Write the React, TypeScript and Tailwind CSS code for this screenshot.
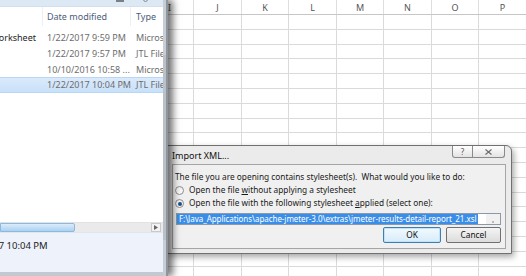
import React from "react";

// ─── Sheet columns (the first one sits under the explorer window) ───────────
const columns = [
  { label: "I", w: "w-[48px]" },
  { label: "J", w: "w-[48px]" },
  { label: "K", w: "w-[47px]" },
  { label: "L", w: "w-[48px]" },
  { label: "M", w: "w-[47px]" },
  { label: "N", w: "w-[48px]" },
  { label: "O", w: "w-[47px]" },
  { label: "P", w: "w-[48px]" },
];

const rowCount = 18;

const files = [
  { name: "New Microsoft Excel Worksheet", date: "1/22/2017 9:59 PM", type: "Microsoft Excel Worksheet", selected: false },
  { name: "", date: "1/22/2017 9:57 PM", type: "JTL File", selected: false },
  { name: "", date: "10/10/2016 10:58 ...", type: "Microsoft Excel Worksheet", selected: false },
  { name: "", date: "1/22/2017 10:04 PM", type: "JTL File", selected: true },
];

function Sheet() {
  return (
    <div className="flex flex-col pl-[146px] bg-white">
      <div className="flex h-[15px] border-b border-[#c6c6c6] bg-white">
        {columns.map((c) => (
          <div
            key={c.label}
            className={`${c.w} shrink-0 flex items-center justify-center border-r border-[#dedede] text-[9px] text-[#555] leading-none`}
          >
            {c.label}
          </div>
        ))}
      </div>
      {Array.from({ length: rowCount }).map((_, r) => (
        <div key={r} className="flex h-[14.8px]">
          {columns.map((c) => (
            <div key={c.label} className={`${c.w} shrink-0 border-r border-b border-[#dadada]`} />
          ))}
        </div>
      ))}
    </div>
  );
}

function Explorer() {
  return (
    <div className="absolute left-0 top-0 z-20 flex h-[276px] w-[168px] shadow-[5px_0_7px_rgba(0,0,0,0.55)]">
      <div className="flex w-[163px] flex-col overflow-hidden bg-white text-[9px] leading-none">
        {/* toolbar strip */}
        <div className="relative h-[7px] bg-[#dde8f5] border-b border-[#d5dfeb]">
          <div className="absolute left-[116px] top-0 h-[2px] w-[8px] bg-[#7a7f86]" />
          <div className="absolute left-[143px] top-[-3px] h-[5px] w-[5px] rounded-full border border-[#8a9099]" />
        </div>

        {/* column headers */}
        <div className="flex h-[19px] items-center text-[#4c607a]">
          <div className="h-full w-[43px] border-r border-[#eceff3]" />
          <div className="flex h-full w-[88px] items-center border-r border-[#eceff3] pl-[4px]">Date modified</div>
          <div className="pl-[5px]">Type</div>
        </div>

        {/* rows */}
        <div className="flex flex-col pt-[4px]">
          {files.map((f) => (
            <div
              key={f.date}
              className={`flex h-[15.7px] items-center whitespace-nowrap ${
                f.selected ? "bg-gradient-to-b from-[#dbeafb] to-[#c8e0f9] border-y border-[#b8d6f5]" : ""
              }`}
            >
              <div className="flex w-[43px] shrink-0 justify-end overflow-hidden pr-[7px] text-[#1e1e1e]">{f.name}</div>
              <div className="w-[88px] shrink-0 overflow-hidden pl-[4px] text-[#6d6d6d]">{f.date}</div>
              <div className="min-w-0 flex-1 overflow-hidden pl-[5px] text-[#6d6d6d]">{f.type}</div>
            </div>
          ))}
        </div>

        <div className="flex-1" />

        {/* horizontal scrollbar */}
        <div className="flex h-[10px] items-stretch bg-[#eaeaea] border-t border-[#e2e2e2]">
          <div className="w-[75px] rounded-r-[2px] border border-[#8fb8dd] bg-gradient-to-b from-[#dcecfa] to-[#a9d2f2]" />
          <div className="flex-1" />
          <div className="mr-[2px] flex w-[10px] items-center justify-center border border-[#c9c9c9] bg-[#f3f3f3]">
            <svg width="4" height="5" viewBox="0 0 4 5">
              <path d="M0 0 L4 2.5 L0 5 Z" fill="#666" />
            </svg>
          </div>
        </div>

        {/* status */}
        <div className="flex h-[40px] items-start overflow-hidden border-t border-[#dfe6f0] bg-[#eef2fb] pt-[8px]">
          <span className="-ml-[41px] whitespace-nowrap text-[9.5px] text-[#222]">1/22/2017 10:04 PM</span>
        </div>
        <div className="h-[4px] bg-[#c3c9d0]" />
      </div>

      {/* frame edge */}
      <div className="flex w-[5px] flex-col bg-[#c7cdd4] border-r-2 border-[#8e959c]">
        <div className="h-[55px]" />
        <div className="h-[185px] bg-[#b9c0c7]" />
      </div>
    </div>
  );
}

function Radio({ checked }: { checked?: boolean }) {
  return (
    <span className="flex h-[9px] w-[9px] shrink-0 items-center justify-center rounded-full border border-[#8d8d8d] bg-gradient-to-br from-[#e6e6e6] to-white">
      {checked && <span className="h-[4px] w-[4px] rounded-full bg-[#1f4f8a]" />}
    </span>
  );
}

function ImportDialog() {
  return (
    <div className="absolute left-[166px] top-[145px] z-10 flex h-[109px] w-[346px] flex-col rounded-tr-[6px] border border-[#707070] bg-[#ebebeb] shadow-[2px_3px_6px_rgba(0,0,0,0.35)]">
      {/* title bar */}
      <div className="flex h-[17px] items-start justify-between">
        <span className="pl-[5px] pt-[5px] text-[9px] leading-none text-[#111]">Import XML...</span>
        <div className="mr-[6px] flex">
          <div className="flex h-[12px] w-[21px] items-center justify-center rounded-bl-[3px] border border-t-0 border-[#8a8a8a] bg-gradient-to-b from-white to-[#e3e3e3] text-[8px] leading-none text-[#555]">
            ?
          </div>
          <div className="flex h-[12px] w-[32px] items-center justify-center rounded-br-[3px] border border-l-0 border-t-0 border-[#8a8a8a] bg-gradient-to-b from-white to-[#e3e3e3]">
            <svg width="7" height="6" viewBox="0 0 7 6">
              <path d="M0.5 0.5 L6.5 5.5 M6.5 0.5 L0.5 5.5" stroke="#6a6a6a" strokeWidth="1.1" fill="none" />
            </svg>
          </div>
        </div>
      </div>

      {/* content */}
      <div className="mx-[5px] mt-[1px] flex h-[85px] flex-col border border-[#a5a5a5] bg-[#f0f0f0] pl-[2px] pr-[4px] pt-[6px] text-[8.3px] leading-none text-[#1a1a1a]">
        <div className="flex h-[13px] items-center whitespace-nowrap">
          The file you are opening contains stylesheet(s).&nbsp; What would you like to do:
        </div>
        <div className="flex h-[13px] items-center gap-[5px] whitespace-nowrap">
          <Radio />
          <span>
            Open the file <span className="underline">w</span>ithout applying a stylesheet
          </span>
        </div>
        <div className="flex h-[13px] items-center gap-[5px] whitespace-nowrap">
          <Radio checked />
          <span>
            Open the file with the following stylesheet <span className="underline">a</span>pplied (select one):
          </span>
        </div>
        <div className="ml-[1px] mt-[3px] flex h-[12px] border border-[#8c99a8] bg-white">
          <div className="flex min-w-0 flex-1 items-center overflow-hidden">
            <span className="whitespace-nowrap bg-[#3a8ee8] px-[2px] text-[8px] leading-[10px] tracking-[-0.05px] text-white">
              F:\Java_Applications\apache-jmeter-3.0\extras\jmeter-results-detail-report_21.xsl
            </span>
          </div>
          <div className="flex w-[14px] shrink-0 items-end justify-center bg-[#f1f1f1] pb-[1px]">
            <span className="h-[2px] w-[2px] bg-[#b9b9b9]" />
          </div>
        </div>
        <div className="mt-[2px] flex justify-end gap-[5px]">
          <button className="h-[16px] w-[58px] rounded-[2px] border border-[#3c7fb1] bg-gradient-to-b from-[#f2f9fe] to-[#d7ecfa] text-[8.3px] text-[#111] shadow-[inset_0_0_0_1px_#c1e3f9]">
            OK
          </button>
          <button className="h-[16px] w-[55px] rounded-[2px] border border-[#707070] bg-gradient-to-b from-[#f4f4f4] to-[#dcdcdc] text-[8.3px] text-[#111]">
            Cancel
          </button>
        </div>
      </div>
    </div>
  );
}

export default function App() {
  return (
    <div className="relative h-[276px] w-[526px] overflow-hidden bg-white font-['Noto_Sans',sans-serif]">
      <Sheet />
      <ImportDialog />
      <Explorer />
    </div>
  );
}
